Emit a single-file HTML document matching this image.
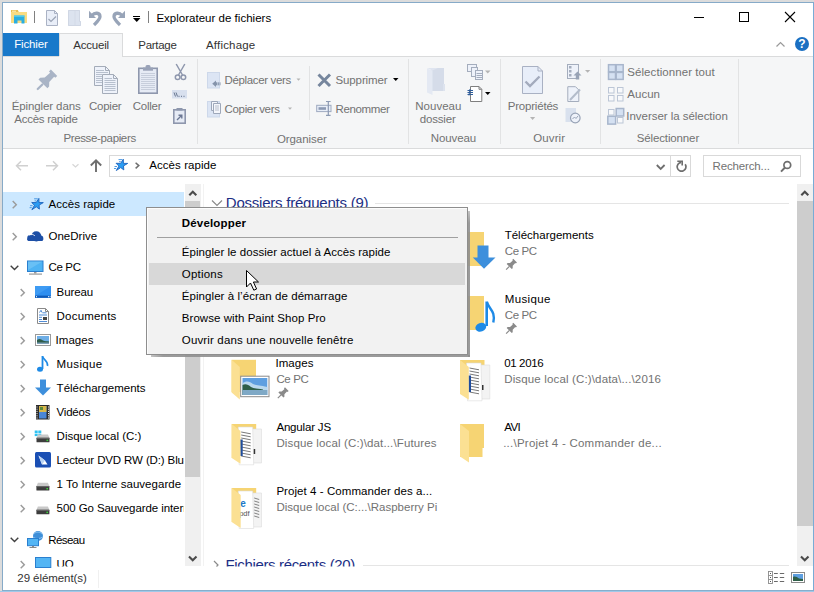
<!DOCTYPE html>
<html><head><meta charset="utf-8">
<style>
*{margin:0;padding:0;box-sizing:border-box}
html,body{width:814px;height:592px;overflow:hidden;background:#dcdcdc;font-family:"Liberation Sans",sans-serif;font-size:12px;color:#000}
.a{position:absolute}
.t{position:absolute;white-space:nowrap;line-height:16px;font-size:12px;letter-spacing:-0.3px}
.g{color:#6d6d6d}
#win{position:absolute;left:2px;top:2px;width:812px;height:589px;border:1px solid #86aac8;border-right-color:#78acd6;border-bottom-color:#86aecc;background:#fff;overflow:hidden}
svg{position:absolute;overflow:visible}
.tx text{font-family:"Liberation Sans",sans-serif;white-space:pre}
</style></head><body>
<div class="a" style="left:0;top:591px;width:814px;height:1px;background:#a0c8e8"></div>
<div id="win"></div>

<!-- all content positioned in page coords -->
<div class="a" style="left:0;top:0;width:814px;height:592px">

<!-- ===== TITLE BAR ===== -->
<!-- QAT icons -->
<svg style="left:11px;top:10px" width="16" height="14" viewBox="0 0 16 14">
 <path d="M0 0.5H7L8 2H16V13H0Z" fill="#f3d36b"/>
 <rect x="0" y="0" width="7" height="2" fill="#e9bf52"/>
 <rect x="1" y="0.7" width="4" height="1" fill="#fff3c0"/>
 <rect x="0" y="2" width="16" height="11" fill="#f9dc82"/>
 <path d="M3 5.5H13.5V13.5H10.5V10.5H6.5V13.5H3Z" fill="#2aaee0"/>
 <rect x="3" y="5.5" width="10.5" height="1.2" fill="#5fd3f0"/>
</svg>
<div class="a" style="left:34px;top:11px;width:1px;height:12px;background:#808080"></div>
<svg style="left:46px;top:10px" width="12" height="16" viewBox="0 0 12 16">
 <path d="M0.5 0.5H8.5L11.5 3.5V15.5H0.5Z" fill="#e9eef8" stroke="#aab2c4"/>
 <path d="M8.5 0.5V3.5H11.5" fill="none" stroke="#aab2c4"/>
 <path d="M2.5 9L5 11.5L10 6.5" fill="none" stroke="#9aa3b5" stroke-width="1.2"/>
</svg>
<svg style="left:68px;top:10px" width="14" height="16" viewBox="0 0 14 16">
 <path d="M0 0H12V11H13V16H0Z" fill="#dce3ef"/>
 <path d="M0.5 0.5H11.5V11.5H12.5V15.5H0.5Z" fill="none" stroke="#d0d7e4"/>
 <path d="M7 1V15" stroke="#d3dae7"/>
</svg>
<svg style="left:89px;top:11px" width="14" height="16" viewBox="0 0 14 16">
 <path d="M0 -0.2V7H7Z" fill="#98a4b8"/>
 <path d="M3.2 4.2C5.5 1.5 11 1.2 11 5.8C11 8.2 9 10 5 14" fill="none" stroke="#98a4b8" stroke-width="3.3"/>
</svg>
<svg style="left:112px;top:11px" width="14" height="16" viewBox="0 0 14 16">
 <g transform="translate(13,0) scale(-1,1)">
 <path d="M0 -0.2V7H7Z" fill="#98a4b8"/>
 <path d="M3.2 4.2C5.5 1.5 11 1.2 11 5.8C11 8.2 9 10 5 14" fill="none" stroke="#98a4b8" stroke-width="3.3"/>
 </g>
</svg>
<div class="a" style="left:133px;top:16px;width:7px;height:1px;background:#000"></div>
<svg style="left:133px;top:18px" width="8" height="5" viewBox="0 0 8 5"><path d="M0 0H7.5L3.75 4Z" fill="#000"/></svg>
<div class="a" style="left:148px;top:11px;width:1px;height:12px;background:#808080"></div>

<!-- min/max/close -->
<div class="a" style="left:694px;top:17px;width:10px;height:1px;background:#000"></div>
<div class="a" style="left:739px;top:12px;width:10px;height:10px;border:1px solid #000"></div>
<svg style="left:785px;top:12px" width="10" height="10"><path d="M0 0L10 10M10 0L0 10" stroke="#000" stroke-width="1.1"/></svg>

<!-- ===== TABS ===== -->
<div class="a" style="left:3px;top:33px;width:56px;height:23px;background:#1979ca"></div>
<div class="a" style="left:59px;top:33px;width:64px;height:24px;background:#f5f6f7;border:1px solid #dadbdc;border-bottom:none"></div>
<!-- help / collapse -->
<svg style="left:776px;top:42px" width="9" height="5"><path d="M0.5 4.5L4.5 0.5L8.5 4.5" stroke="#9a9a9a" fill="none" stroke-width="1.2"/></svg>
<div class="a" style="left:795px;top:37px;width:14px;height:14px;border-radius:50%;background:#1a6fc2;color:#fff;font-weight:bold;font-size:12px;line-height:14px;text-align:center">?</div>

<!-- ===== RIBBON ===== -->
<div class="a" style="left:3px;top:56px;width:810px;height:93px;background:#f5f6f7;border-top:1px solid #dadbdc;border-bottom:1px solid #dadbdc"></div>
<div class="a" style="left:59px;top:56px;width:63px;height:1px;background:#f5f6f7"></div>
<!-- group separators -->
<div class="a" style="left:197px;top:59px;width:1px;height:85px;background:#e2e3e4"></div>
<div class="a" style="left:408px;top:59px;width:1px;height:85px;background:#e2e3e4"></div>
<div class="a" style="left:500px;top:59px;width:1px;height:85px;background:#e2e3e4"></div>
<div class="a" style="left:600px;top:59px;width:1px;height:85px;background:#e2e3e4"></div>
<div class="a" style="left:738px;top:59px;width:1px;height:85px;background:#e2e3e4"></div>
<div class="a" style="left:309px;top:66px;width:1px;height:54px;background:#e2e3e4"></div>

<!-- Presse-papiers -->
<!-- Organiser -->
<!-- Nouveau -->
<!-- Ouvrir -->
<!-- Sélectionner -->


<svg style="left:0;top:0" width="814" height="592" viewBox="0 0 814 592">
<!-- pin -->
<g transform="translate(43.8 83) rotate(45)" fill="#a9b4c6">
 <path d="M-4.5 -14.5H4.5V-11.8H2.8L3.2 -4.5L6.3 -1.2V1.2H-6.3V-1.2L-3.2 -4.5L-2.8 -11.8H-4.5Z"/>
 <rect x="-1.1" y="1" width="2.2" height="8.6" rx="1"/>
</g>
<!-- copy -->
<g stroke="#a4acb9" fill="#eef2fa">
 <path d="M94.5 66.5H105.5L109.5 70.5V85.5H94.5Z"/>
 <path d="M105.5 66.5V70.5H109.5" fill="none"/>
 <path d="M102.5 74.5H113.5L117.5 78.5V93.5H102.5Z"/>
 <path d="M113.5 74.5V78.5H117.5" fill="none"/>
</g>
<g stroke="#b7c0ce" stroke-width="1">
 <path d="M96 70.5H104M96 72.5H108M96 74.5H102M96 76.5H102M96 78.5H102M96 80.5H102M96 82.5H102"/>
 <path d="M104.5 78.5H112M104.5 80.5H115.5M104.5 82.5H115.5M104.5 84.5H115.5M104.5 86.5H115.5M104.5 88.5H115.5M104.5 90.5H115.5"/>
</g>
<!-- paste clipboard -->
<rect x="138.8" y="68.3" width="18.4" height="24.9" fill="#e6ebf5" stroke="#8e97ad" stroke-width="1.6"/>
<path d="M141 73.5H155M141 75.5H155M141 77.5H155M141 79.5H155M141 81.5H155M141 83.5H155M141 85.5H155M141 87.5H155M141 89.5H155" stroke="#c3cbd9" stroke-width="0.9"/>
<rect x="143" y="67.5" width="10" height="3.2" fill="#9aa3b8"/>
<rect x="145.5" y="65" width="5" height="3.5" rx="1.5" fill="#9aa3b8"/>
<!-- scissors -->
<g stroke="#8e97ad" fill="none" stroke-width="1.5">
 <path d="M176.2 64L182.5 75M184.8 64L178.5 75"/>
 <circle cx="177.6" cy="77.2" r="2.3"/>
 <circle cx="183.4" cy="77.2" r="2.3"/>
</g>
<!-- copy path -->
<rect x="172" y="90" width="15" height="8.5" fill="#d8e0ee"/>
<path d="M174 92.5L175.5 96.5M176 92.5L177.5 96.5" stroke="#5a6a85" stroke-width="0.9"/>
<path d="M178.5 96.3h1M181 96.3h1M183.5 96.3h1" stroke="#5a6a85" stroke-width="1"/>
<!-- paste shortcut -->
<rect x="173.8" y="109.8" width="11.4" height="13.4" fill="#e6ebf5" stroke="#8e97ad" stroke-width="1.6"/>
<rect x="176.5" y="108" width="6" height="2.5" fill="#8e97ad"/>
<path d="M177 120L181.5 115.5M178.5 115.3H181.8V118.5" stroke="#6c7894" stroke-width="1.4" fill="none"/>

<!-- move to -->
<rect x="207.5" y="72.5" width="12" height="15.5" fill="#dce5f4" stroke="#cdd8ea"/>
<path d="M212.2 83.8L216 80.6V87Z" fill="#8594ab"/>
<rect x="215.8" y="82.3" width="4.7" height="3" fill="#8594ab"/>
<path d="M217.6 82V85.6M219.3 82V85.6" stroke="#dce5f4" stroke-width="0.6"/>
<!-- copy to -->
<rect x="207.5" y="101.5" width="12" height="15.5" fill="#dce5f4" stroke="#cdd8ea"/>
<g stroke="#9ea8ba" fill="#f4f6fb">
 <path d="M211.5 101.5H217.5V110.5H211.5Z"/>
 <path d="M213.5 103.5H220.5V113.5H213.5Z"/>
</g>
<path d="M215 106H219M215 108H219M215 110H219" stroke="#a9b2c2" stroke-width="0.8"/>
<!-- delete X -->
<path d="M318.5 74.5L330 86M330 74.5L318.5 86" stroke="#76869d" stroke-width="3"/>
<!-- rename -->
<rect x="316.7" y="105.3" width="14.3" height="6.3" fill="#e8eef8" stroke="#9eaac0"/>
<rect x="318.5" y="107.2" width="7.5" height="2.6" fill="#8c9ab3"/>
<path d="M328.3 101.5V115.3M326 101.5H330.6M326 115.3H330.6" stroke="#8c9ab3" stroke-width="1.2"/>

<!-- new folder big -->
<path d="M431 68H444V91H431Z" fill="#d5dce9"/>
<path d="M443 84V91H445V84Z" fill="#dde3ee"/>
<path d="M427 68.5L432.5 70.5V95L427 92.5Z" fill="#e4e9f3"/>
<path d="M427 68H438L432.5 70.5Z" fill="#dfe5f0"/>
<!-- new item small top -->
<g stroke="#a4adbd" fill="#eef2fa">
 <rect x="467.5" y="64.5" width="9" height="7"/>
 <rect x="471.5" y="67.5" width="6" height="9"/>
 <rect x="475.5" y="70.5" width="7" height="9"/>
</g>
<path d="M476.5 73.5H482M476.5 75.5H482M476.5 77.5H482" stroke="#a4adbd"/>
<path d="M485 70.5H490.5L487.75 73.5Z" fill="#b4b4b4"/>
<!-- new item doc -->
<path d="M470.5 86.5H479L481.8 89.3V101.5H470.5Z" fill="#fff" stroke="#7f7f7f"/>
<path d="M479 86.5V89.3H481.8" fill="none" stroke="#7f7f7f"/>
<path d="M467.5 90.5H473M467.5 92.5H473M467.5 94.5H473M470 89L469 95.5" stroke="#2e5c9a" stroke-width="1"/>
<path d="M485 92H490.5L487.75 95Z" fill="#000"/>

<!-- properties -->
<path d="M522.5 66.5H538L542.5 71V93.5H522.5Z" fill="#e8eef9" stroke="#a9b1c3"/>
<path d="M538 66.5V71H542.5" fill="none" stroke="#a9b1c3"/>
<path d="M525.5 81.5L530 86L539.5 76.5" fill="none" stroke="#a3abbd" stroke-width="2.4"/>
<path d="M530 117H535.2L532.6 120Z" fill="#b4b4b4"/>
<!-- open list -->
<rect x="567.5" y="64.5" width="11" height="14" fill="#eef2fa" stroke="#a4adbd"/>
<rect x="569" y="66" width="2.5" height="2.5" fill="#a4adbd"/>
<rect x="569" y="70" width="2.5" height="2.5" fill="#a4adbd"/>
<rect x="569" y="74" width="2.5" height="2.5" fill="#a4adbd"/>
<path d="M577.5 71.5L581.5 75.5H579.2V79.5H575.8V75.5H573.5Z" fill="#98a3b6"/>
<path d="M585 70H590.3L587.65 72.8Z" fill="#b4b4b4"/>
<!-- edit -->
<path d="M567.8 86.7H575.5L578.8 90V101.5H567.8Z" fill="#eef2fa" stroke="#a4adbd"/>
<path d="M570 100L580 89.5" stroke="#b3bccb" stroke-width="2"/>
<!-- history -->
<rect x="565.5" y="108" width="10.5" height="14" fill="#d9e1ee"/>
<circle cx="575.3" cy="118" r="4.8" fill="#eef2fa" stroke="#98a3b6" stroke-width="1.2"/>
<path d="M572.5 119L574.5 117L576 118.5L578 116" stroke="#98a3b6" fill="none"/>

<!-- select all -->
<g fill="#d5e1f2" stroke="#a8b6cc" stroke-width="1.5">
 <rect x="608.5" y="64.7" width="7" height="7"/>
 <rect x="616.2" y="64.7" width="7" height="7"/>
 <rect x="608.5" y="72.4" width="7" height="7"/>
 <rect x="616.2" y="72.4" width="7" height="7"/>
</g>
<!-- none -->
<g fill="#f8f9fb" stroke="#bcc6d6" stroke-width="1">
 <rect x="608.5" y="87.5" width="5.5" height="5.5"/>
 <rect x="617.5" y="87.5" width="5.5" height="5.5"/>
 <rect x="608.5" y="95.5" width="5.5" height="5.5"/>
 <rect x="617.5" y="95.5" width="5.5" height="5.5"/>
</g>
<!-- invert -->
<g fill="#f8f9fb" stroke="#bcc6d6" stroke-width="1">
 <rect x="608.5" y="109.5" width="5.5" height="5.5"/>
 <rect x="617.5" y="117.5" width="5.5" height="5.5"/>
</g>
<g fill="#d5e1f2" stroke="#a8b6cc" stroke-width="1.5">
 <rect x="616.2" y="108.5" width="7.5" height="7.5"/>
 <rect x="607.8" y="116.3" width="7.8" height="7.8"/>
</g>
<!-- small dropdown arrows organiser -->
<path d="M296.5 78.5H300.5L298.5 80.8Z" fill="#b4b4b4"/>
<path d="M288 107.5H292L290 109.8Z" fill="#b4b4b4"/>
<path d="M393 78H398.5L395.75 81Z" fill="#000"/>
</svg>

<!-- ===== NAV BAR ===== -->
<div class="a" style="left:109px;top:155px;width:582px;height:22px;border:1px solid #d9d9d9;background:#fff"></div>
<div class="a" style="left:670px;top:156px;width:1px;height:20px;background:#d9d9d9"></div>
<div class="a" style="left:703px;top:155px;width:98px;height:22px;border:1px solid #d9d9d9;background:#fff"></div>

<!-- ===== NAV PANE ===== -->
<div class="a" style="left:3px;top:192px;width:181px;height:24px;background:#cce8ff"></div>
<div class="a" style="left:185px;top:184px;width:16px;height:382px;background:#f0f0f0"></div>
<div class="a" style="left:185px;top:201px;width:15px;height:276px;background:#cdcdcd"></div>
<div class="a" style="left:203px;top:184px;width:1px;height:382px;background:#f2f2f2"></div>

<!-- ===== CONTENT ===== -->
<div class="a" style="left:797px;top:184px;width:16px;height:382px;background:#f0f0f0"></div>
<div class="a" style="left:797px;top:201px;width:16px;height:325px;background:#cdcdcd"></div>
<div class="a" style="left:363px;top:565px;width:426px;height:1px;background:#e5e5e5"></div>
<div class="a" style="left:375px;top:203px;width:414px;height:1px;background:#e5e5e5"></div>




<svg style="left:0;top:0" width="814" height="592" viewBox="0 0 814 592">
<defs>
 <g id="star">
  <path d="M9.3 0.6L9.4 4.8L13.7 4.8L9.5 7.3L9.8 11.3L6.7 9L2.3 11.9L4.9 7.5L2.1 4.7L6.6 4.8Z" fill="#2b9cf2" stroke="#1a62bd" stroke-width="0.9" stroke-linejoin="round"/>
  <path d="M4.5 1H8.2M5 3.1H6.8M0.5 7.9H3M0 9.9H2.2" stroke="#3a8ee0" stroke-width="0.9"/>
 </g>
 <g id="chev"><path d="M0.7 0.7L4.3 4.3L0.7 7.9" fill="none" stroke="#9c9c9c" stroke-width="1.45"/></g>
 <g id="chevd"><path d="M0.7 0.7L4.5 4.5L8.3 0.7" fill="none" stroke="#404040" stroke-width="1.4"/></g>
 <g id="drive">
  <path d="M1.5 0H11.5L13 3.5H0Z" fill="#c9c9c9"/>
  <rect x="0" y="3.3" width="13" height="4.5" rx="0.6" fill="#3d3d3d"/>
  <rect x="0" y="3.3" width="13" height="1" fill="#6a6a6a"/>
  <rect x="10" y="5.2" width="1.6" height="1.4" fill="#3cd43c"/>
 </g>
 <g id="pin" fill="#8a8a8a">
  <g transform="rotate(45)">
   <path d="M-2.6 -7.5H2.6V-6H1.7L1.9 -2.2L3.6 -0.5V0.8H-3.6V-0.5L-1.9 -2.2L-1.7 -6H-2.6Z"/>
   <rect x="-0.6" y="0.6" width="1.2" height="4.6"/>
  </g>
 </g>
 <g id="docfolder">
  <path d="M0 0H24.5V34H0Z" fill="#f6d473"/>
  <path d="M20 5H29.8V39H21Z" fill="#f3f3f3" stroke="#dcdcdc" stroke-width="0.6"/>
  <path d="M6.5 3H21L22 40.8H7.5Z" fill="#fff" stroke="#dadada" stroke-width="0.6"/>
  <path d="M9.5 8L19 9.8M9.5 11L19 12.8M9.5 14L19 15.8M9.5 17L19 18.8M9.5 20L19 21.8M9.5 23L19 24.8M9.5 26L19 27.8M9.5 29L19 30.8M9.5 32L19 33.8" stroke="#6a6a6a" stroke-width="0.9"/>
  <path d="M8.3 15.5H11V32H8.6Z" fill="#1f4d9e"/>
  <rect x="22" y="25" width="1.5" height="5" fill="#333"/>
  <path d="M0 0L8.8 7V39.8L0 34Z" fill="#fbe093"/>
 </g>
 <g id="folderback">
  <path d="M0 0H24.5V34H0Z" fill="#f6d473"/>
 </g>
</defs>

<!-- nav bar -->
<path d="M16.5 165.8H28M21 161.3L16.5 165.8L21 170.3" fill="none" stroke="#d0d0d0" stroke-width="1.5"/>
<path d="M46 165.8H57.5M53 161.3L57.5 165.8L53 170.3" fill="none" stroke="#d0d0d0" stroke-width="1.5"/>
<path d="M72.5 164.2L75.5 167L78.5 164.2" fill="none" stroke="#d6d6d6" stroke-width="1.2"/>
<path d="M96 160.5V172M90.8 165.5L96 160.3L101.2 165.5" fill="none" stroke="#6e6e6e" stroke-width="1.9"/>
<use href="#star" x="114" y="158.6"/>
<path d="M135.6 162.8L138.8 165.6L135.6 168.4" fill="none" stroke="#6e6e6e" stroke-width="1.5"/>
<path d="M656.8 165L660.7 168.9L664.6 165" fill="none" stroke="#6e6e6e" stroke-width="1.8"/>
<path d="M681.2 162.4A4.4 4.4 0 1 0 685.2 164.3" fill="none" stroke="#6e6e6e" stroke-width="1.7"/>
<path d="M677.3 161.2H682.2V165.6" fill="none" stroke="#6e6e6e" stroke-width="1.6"/>
<circle cx="787.3" cy="165" r="3.4" fill="none" stroke="#6e6e6e" stroke-width="1.7"/>
<path d="M785 167.5L781 171.6" stroke="#6e6e6e" stroke-width="2"/>

<!-- nav pane chevrons -->
<use href="#chev" x="12" y="200.4"/>
<use href="#chev" x="12" y="232.4"/>
<use href="#chevd" x="10" y="265"/>
<use href="#chev" x="20" y="288.4"/>
<use href="#chev" x="20" y="312.4"/>
<use href="#chev" x="20" y="336.4"/>
<use href="#chev" x="20" y="360.4"/>
<use href="#chev" x="20" y="384.4"/>
<use href="#chev" x="20" y="408.4"/>
<use href="#chev" x="20" y="432.4"/>
<use href="#chev" x="20" y="456.4"/>
<use href="#chev" x="20" y="480.4"/>
<use href="#chev" x="20" y="504.4"/>
<use href="#chevd" x="10" y="537"/>
<use href="#chev" x="20" y="560.4"/>

<!-- nav pane icons -->
<use href="#star" x="29.6" y="197.8"/>
<!-- onedrive cloud -->
<g fill="#1d4fa6">
 <circle cx="36.3" cy="236.3" r="5.1"/>
 <circle cx="30.3" cy="238" r="3.1"/>
 <circle cx="40.6" cy="238.2" r="2.7"/>
 <rect x="27.2" y="238" width="16" height="2.9" rx="1.4"/>
</g>
<path d="M29.5 235.3C31 233.8 33.5 234 34.8 236" fill="none" stroke="#fff" stroke-width="0.9"/>
<!-- monitor Ce PC -->
<rect x="27.5" y="261" width="15.5" height="10.5" fill="#4fb3f3" stroke="#2a7fcf"/>
<path d="M28 261.5L42.5 261.5L28 270Z" fill="#7cc8f7" opacity="0.6"/>
<rect x="34" y="272" width="2.5" height="1.5" fill="#9a9a9a"/>
<rect x="29" y="273.5" width="13" height="1.2" fill="#9a9a9a"/>
<!-- bureau -->
<rect x="35" y="286" width="16" height="11.8" fill="#2f8ff0"/>
<path d="M35 286H51L35 296Z" fill="#4aa3f5" opacity="0.6"/>
<rect x="35" y="295.6" width="16" height="2.2" fill="#0e5ab8"/>
<rect x="36" y="296.2" width="1" height="1" fill="#fff"/><rect x="48" y="296.2" width="1" height="1" fill="#fff"/><rect x="49.6" y="296.2" width="1" height="1" fill="#fff"/>
<!-- documents -->
<path d="M37.5 308.5H45.5L48.5 311.5V323.5H37.5Z" fill="#fff" stroke="#8a8a8a"/>
<path d="M45.5 308.5V311.5H48.5" fill="none" stroke="#8a8a8a"/>
<path d="M39.5 312.5L41 310.3L42 312.5M42.5 312.8H46.5M39 315H47M39 317.3H42M39 319.5H42M39 321.5H47" stroke="#3d7fd0" stroke-width="0.9" fill="none"/>
<rect x="43" y="317" width="4" height="3" fill="#444"/>
<!-- images -->
<rect x="35.5" y="334.5" width="15" height="11" fill="#fff" stroke="#9a9a9a"/>
<rect x="37" y="336" width="12" height="8" fill="#6eaee6"/>
<path d="M37 340C39 338.5 41 338.7 43 340.5C45 341.5 47 341 49 341.5V344H37Z" fill="#2d5c4a"/>
<path d="M37 342.5H49V344H37Z" fill="#7ea0b8"/>
<!-- musique -->
<path d="M42.5 356V369" stroke="#1e8ae6" stroke-width="1.8"/>
<ellipse cx="40" cy="369.3" rx="3" ry="2.5" fill="#1e8ae6"/>
<path d="M42.5 356.5C43.5 360 48.5 361 47.5 366" fill="none" stroke="#1e8ae6" stroke-width="1.6"/>
<!-- telechargements -->
<path d="M40 379.6H46V387.5H51L43 395.6L35 387.5H40Z" fill="#3d8fdc"/>
<!-- videos -->
<rect x="36" y="405" width="13.5" height="14.5" fill="#2a2a2a"/>
<rect x="39" y="406" width="7.5" height="12.5" fill="#4a86d6"/>
<rect x="39" y="406" width="7.5" height="6" fill="#d8b84a"/>
<rect x="40" y="407" width="3" height="3" fill="#5a8a3a"/>
<path d="M37 406.5V418.5M48.5 406.5V418.5" stroke="#fff" stroke-width="1" stroke-dasharray="1 1.2"/>
<!-- disque local -->
<rect x="34.7" y="430.5" width="3" height="2.5" fill="#2ec2f2"/><rect x="38.3" y="430.5" width="3" height="2.5" fill="#2ec2f2"/>
<rect x="34.7" y="433.6" width="3" height="2.5" fill="#2ec2f2"/><rect x="38.3" y="433.6" width="3" height="2.5" fill="#2ec2f2"/>
<use href="#drive" x="36.5" y="434.5"/>
<!-- dvd -->
<rect x="35" y="452" width="16" height="15.6" rx="1.5" fill="#1a4fb4"/>
<path d="M38.5 455.5L45 460.5L47.5 464.5H42L38.5 455.5Z" fill="#fff"/>
<path d="M38.5 455.5L45 460.5L42 464.5Z" fill="#b9d3f3"/>
<!-- drives -->
<use href="#drive" x="36.4" y="482.8"/>
<use href="#drive" x="36.4" y="506.5"/>
<!-- reseau -->
<circle cx="38" cy="536" r="5" fill="#3f8fd8"/>
<path d="M34 533.5C36 532 39 531.5 42 533.5M33.5 537.5C36 539 40 539 42.7 537" stroke="#9fd0f7" stroke-width="0.8" fill="none"/>
<rect x="27.5" y="538.5" width="11" height="7.2" fill="#53b5f4" stroke="#2a7fcf"/>
<rect x="32" y="546" width="2" height="1" fill="#8a8a8a"/>
<rect x="29.5" y="547" width="7" height="1" fill="#8a8a8a"/>
<!-- UQ -->
<rect x="35.5" y="557.5" width="15.3" height="10" fill="#53b5f4" stroke="#2a7fcf"/>

<!-- nav scrollbar arrows -->
<path d="M189.3 195.3L192.8 191.8L196.3 195.3" fill="none" stroke="#4a4a4a" stroke-width="2.1"/>
<path d="M189 556.5L192.75 560.3L196.5 556.5" fill="none" stroke="#4a4a4a" stroke-width="2.1"/>
<!-- content scrollbar arrows -->
<path d="M801.3 195.3L804.8 191.8L808.3 195.3" fill="none" stroke="#4a4a4a" stroke-width="2.1"/>
<path d="M801 556.5L804.75 560.3L808.5 556.5" fill="none" stroke="#4a4a4a" stroke-width="2.1"/>

<!-- content section chevrons -->
<path d="M212 200.5L217 205.5L222 200.5" fill="none" stroke="#8a8a8a" stroke-width="1.2"/>
<path d="M214 561L218 565L216.5 566.5" fill="none" stroke="#8a8a8a" stroke-width="1.2"/>

<!-- folders: generic plain -->
<g id="f_tel">
 <path d="M460 232H484V266H460Z" fill="#f6d473"/>
 <path d="M477.5 245.5H488.5V257.5H495.5L484 268.7L472.8 257.5H477.5Z" fill="#3d8fdc"/>
</g>
<g>
 <path d="M460 296H484V330H460Z" fill="#f6d473"/>
 <path d="M486.7 301.5V326" stroke="#1e8ae6" stroke-width="2.6"/>
 <ellipse cx="480.8" cy="327.2" rx="5.6" ry="4.3" transform="rotate(-20 480.8 327.2)" fill="#1e8ae6"/>
 <path d="M487 302C488.5 309 496 311 493.3 322.5" fill="none" stroke="#1e8ae6" stroke-width="2.4"/>
</g>
<!-- images folder -->
<path d="M231.6 359.8H256V392H231.6Z" fill="#f6d473"/>
<path d="M231.6 359.8L239.8 367V399.4L231.6 392.5Z" fill="#fbe093"/>
<rect x="240.7" y="376.2" width="28.3" height="20.5" fill="#fff" stroke="#8a8a8a"/>
<rect x="242.5" y="378" width="24.8" height="17" fill="#5e9fe0"/>
<path d="M242.5 383C246 380.5 250 381 253 384C256 385.5 260 385 267.3 387V395H242.5Z" fill="#b9d8ee"/>
<path d="M242.5 385C245 383.5 248 384 251 387C254 388.5 258 389 263 389.5V395H242.5Z" fill="#2e5f48"/>
<path d="M242.5 390H267.3V395H242.5Z" fill="#7fa9c6"/>
<!-- 01 2016 -->
<use href="#docfolder" x="460" y="360"/>
<!-- AVI -->
<path d="M460 424H484V448H482.5V457H460Z" fill="#f6d473"/>
<path d="M460 424L469 431V462.6L460 456.6Z" fill="#fbe093"/>
<!-- Angular -->
<use href="#docfolder" x="231.7" y="424"/>
<!-- Projet 4 -->
<g transform="translate(231.7 488)">
 <path d="M0 0H24.5V34H0Z" fill="#f6d473"/>
 <path d="M20 5H29.8V39H21Z" fill="#f3f3f3" stroke="#dcdcdc" stroke-width="0.6"/>
 <path d="M6.5 3H21L22 40.5H7.5Z" fill="#fff" stroke="#dadada" stroke-width="0.6"/>
 <path d="M22.5 10L27.5 11.5M22.5 13L27.5 14.5M22.5 16L27.5 17.5M22.5 19L27.5 20.5M22.5 22L27.5 23.5M22.5 25L27.5 26.5M22.5 28L27.5 29.5" stroke="#777" stroke-width="0.9"/>
 <text x="8.5" y="18.5" style="font:bold 10px 'Liberation Sans';fill:#1d78c8">e</text>
 <text x="7.5" y="28" style="font:7.5px 'Liberation Sans';fill:#555">pdf</text>
 <path d="M0 0L9 7V40L0 34Z" fill="#fbe093"/>
</g>
<!-- pins under Ce PC items -->
<use href="#pin" x="509.8" y="266"/>
<use href="#pin" x="509.8" y="330"/>
<use href="#pin" x="281.5" y="394.5"/>

<!-- status bar icons -->
<rect x="768.5" y="571.5" width="4" height="12" fill="#fff" stroke="#8a8a8a" stroke-width="0.9"/>
<path d="M768.5 575.5H772.5M768.5 579.5H772.5" stroke="#8a8a8a" stroke-width="0.9"/>
<rect x="770" y="573" width="1" height="1" fill="#555"/><rect x="770" y="577" width="1" height="1" fill="#555"/><rect x="770" y="581" width="1" height="1" fill="#555"/>
<path d="M774 573.5H777.8M779.8 573.5H784.2M774 577.5H777.8M779.8 577.5H784.2M774 581.5H777.8M779.8 581.5H784.2" stroke="#6a6a6a" stroke-width="1"/>
<rect x="791.5" y="572.5" width="13" height="10" fill="#fff" stroke="#8a8a8a"/>
<rect x="793" y="574" width="10" height="7" fill="#5e9fe0"/>
<path d="M793 577C795 576 797 577 799 578.5L803 579V581H793Z" fill="#2e5f48"/>
<rect x="98" y="570" width="1" height="18" fill="#f0f0f0"/>
</svg>

<svg class="tx" style="left:0;top:0" width="814" height="592" viewBox="0 0 814 592">
<text x="156.4" y="21.8" fill="#000" style="font-size:11.5px;letter-spacing:0.015px">Explorateur de fichiers</text>
<text x="14.2" y="48.4" fill="#fff" style="font-size:11.5px;letter-spacing:-0.163px">Fichier</text>
<text x="73.2" y="48.6" fill="#333" style="font-size:11.5px;letter-spacing:-0.186px">Accueil</text>
<text x="138.3" y="48.6" fill="#333" style="font-size:11.5px;letter-spacing:-0.297px">Partage</text>
<text x="206" y="48.6" fill="#333" style="font-size:11.5px;letter-spacing:0.182px">Affichage</text>
<text x="11.7" y="109.6" fill="#727272" style="font-size:11.5px;letter-spacing:-0.106px">Épingler dans</text>
<text x="14.3" y="122.6" fill="#727272" style="font-size:11.5px;letter-spacing:-0.271px">Accès rapide</text>
<text x="89" y="109.6" fill="#727272" style="font-size:11.5px;letter-spacing:-0.249px">Copier</text>
<text x="132.7" y="109.6" fill="#727272" style="font-size:11.5px;letter-spacing:-0.221px">Coller</text>
<text x="63.4" y="142.3" fill="#727272" style="font-size:11.5px;letter-spacing:-0.353px">Presse-papiers</text>
<text x="224.6" y="83.7" fill="#727272" style="font-size:11.5px;letter-spacing:-0.366px">Déplacer vers</text>
<text x="224.6" y="112.8" fill="#727272" style="font-size:11.5px;letter-spacing:-0.35px">Copier vers</text>
<text x="335.5" y="83.7" fill="#727272" style="font-size:11.5px;letter-spacing:-0.115px">Supprimer</text>
<text x="335.5" y="112.8" fill="#727272" style="font-size:11.5px;letter-spacing:-0.364px">Renommer</text>
<text x="276.9" y="143" fill="#727272" style="font-size:11.5px;letter-spacing:-0.07px">Organiser</text>
<text x="415.3" y="110" fill="#727272" style="font-size:11.5px;letter-spacing:0.01px">Nouveau</text>
<text x="419.7" y="122.8" fill="#727272" style="font-size:11.5px;letter-spacing:-0.157px">dossier</text>
<text x="430.8" y="142.3" fill="#727272" style="font-size:11.5px;letter-spacing:-0.106px">Nouveau</text>
<text x="507.7" y="110" fill="#727272" style="font-size:11.5px;letter-spacing:-0.196px">Propriétés</text>
<text x="533.3" y="142.3" fill="#727272" style="font-size:11.5px;letter-spacing:0.085px">Ouvrir</text>
<text x="627.3" y="76.2" fill="#727272" style="font-size:11.5px;letter-spacing:0.068px">Sélectionner tout</text>
<text x="627.3" y="98.2" fill="#727272" style="font-size:11.5px;letter-spacing:0.022px">Aucun</text>
<text x="626.3" y="120" fill="#727272" style="font-size:11.5px;letter-spacing:-0.039px">Inverser la sélection</text>
<text x="636.7" y="142.3" fill="#727272" style="font-size:11.5px;letter-spacing:-0.127px">Sélectionner</text>
<text x="149.2" y="169.2" fill="#000" style="font-size:11.5px;letter-spacing:0.074px">Accès rapide</text>
<text x="712.5" y="169.9" fill="#727272" style="font-size:11.5px;letter-spacing:-0.141px">Recherch...</text>
<text x="17.3" y="581.7" fill="#333" style="font-size:11.5px;letter-spacing:-0.065px">29 élément(s)</text>
</svg>
<svg class="tx" style="left:0;top:0" width="814" height="592" viewBox="0 0 814 592">
<defs><clipPath id="cp_nav"><rect x="3" y="186" width="181" height="380.5"/></clipPath></defs><g clip-path="url(#cp_nav)">
<text x="48.5" y="207.7" fill="#000" style="font-size:11.5px;letter-spacing:0.02px">Accès rapide</text>
<text x="48.5" y="239.7" fill="#000" style="font-size:11.5px;letter-spacing:0.003px">OneDrive</text>
<text x="48.5" y="271.4" fill="#000" style="font-size:11.5px;letter-spacing:-0.35px">Ce PC</text>
<text x="56.6" y="295.6" fill="#000" style="font-size:11.5px;letter-spacing:-0.117px">Bureau</text>
<text x="56.6" y="319.5" fill="#000" style="font-size:11.5px;letter-spacing:0.198px">Documents</text>
<text x="55.6" y="343.6" fill="#000" style="font-size:11.5px;letter-spacing:0.028px">Images</text>
<text x="56.6" y="367.5" fill="#000" style="font-size:11.5px;letter-spacing:0.355px">Musique</text>
<text x="56.6" y="391.5" fill="#000" style="font-size:11.5px;letter-spacing:0.007px">Téléchargements</text>
<text x="56.6" y="415.7" fill="#000" style="font-size:11.5px;letter-spacing:-0.221px">Vidéos</text>
<text x="56.6" y="439.7" fill="#000" style="font-size:11.5px;letter-spacing:-0.023px">Disque local (C:)</text>
<text x="56.6" y="463.7" fill="#000" style="font-size:11.5px;letter-spacing:-0.125px">Lecteur DVD RW (D:) Blu-ray</text>
<text x="56.6" y="487.7" fill="#000" style="font-size:11.5px;letter-spacing:0.03px">1 To Interne sauvegarde</text>
<text x="56.6" y="511.7" fill="#000" style="font-size:11.5px;letter-spacing:-0.085px">500 Go Sauvegarde interne</text>
<text x="48.2" y="543.6" fill="#000" style="font-size:11.5px;letter-spacing:-0.548px">Réseau</text>
<text x="56.6" y="567.6" fill="#000" style="font-size:11.5px;letter-spacing:-0.2px">UQ</text>
</g>
</svg>
<svg class="tx" style="left:0;top:0" width="814" height="592" viewBox="0 0 814 592">
<defs><clipPath id="cp_content"><rect x="201" y="186" width="596" height="380.5"/></clipPath></defs><g clip-path="url(#cp_content)">
<text x="225.8" y="207.9" fill="#1b2e84" style="font-size:15px;letter-spacing:-0.227px">Dossiers fréquents (9)</text>
<text x="225.5" y="570" fill="#1b2e84" style="font-size:15px;letter-spacing:-0.346px">Fichiers récents (20)</text>
<text x="504.7" y="238.6" fill="#000" style="font-size:11.5px;letter-spacing:0.007px">Téléchargements</text>
<text x="504.7" y="254.9" fill="#727272" style="font-size:11.5px;letter-spacing:-0.35px">Ce PC</text>
<text x="504.7" y="302.7" fill="#000" style="font-size:11.5px;letter-spacing:0.388px">Musique</text>
<text x="504.7" y="318.9" fill="#727272" style="font-size:11.5px;letter-spacing:-0.35px">Ce PC</text>
<text x="504.2" y="366.7" fill="#000" style="font-size:11.5px;letter-spacing:-0.35px">01 2016</text>
<text x="504.2" y="382.8" fill="#727272" style="font-size:11.5px;letter-spacing:0.152px">Disque local (C:)\data\...\2016</text>
<text x="504.2" y="430.6" fill="#000" style="font-size:11.5px;letter-spacing:-0.544px">AVI</text>
<text x="503.2" y="446.8" fill="#727272" style="font-size:11.5px;letter-spacing:0.239px">...\Projet 4 - Commander de...</text>
<text x="275.4" y="366.7" fill="#000" style="font-size:11.5px;letter-spacing:0.088px">Images</text>
<text x="276.4" y="382.8" fill="#727272" style="font-size:11.5px;letter-spacing:-0.35px">Ce PC</text>
<text x="276.4" y="430.6" fill="#000" style="font-size:11.5px;letter-spacing:-0.176px">Angular JS</text>
<text x="276.4" y="446.8" fill="#727272" style="font-size:11.5px;letter-spacing:0.136px">Disque local (C:)\dat...\Futures</text>
<text x="276.4" y="494.6" fill="#000" style="font-size:11.5px;letter-spacing:0.063px">Projet 4 - Commander des a...</text>
<text x="276.4" y="510.8" fill="#727272" style="font-size:11.5px;letter-spacing:0.017px">Disque local (C:...\Raspberry Pi</text>
</g>
</svg>
<!-- ===== STATUS ===== -->


<!-- ===== CONTEXT MENU ===== -->
<div class="a" style="left:468px;top:211px;width:1.5px;height:146px;background:linear-gradient(#bdbdbd,#8f8f8f 12px);opacity:.9"></div>
<div class="a" style="left:151px;top:355px;width:318.5px;height:2px;background:linear-gradient(90deg,#bdbdbd,#8f8f8f 12px);opacity:.9"></div>
<div class="a" style="left:146px;top:207px;width:322px;height:148px;background:#f2f2f2;border:1px solid #8e8e8e"></div>
<div class="a" style="left:147px;top:208px;width:320px;height:146px;border-left:1px solid #fcfcfc;border-top:1px solid #fcfcfc"></div>
<div class="a" style="left:157px;top:237px;width:301px;height:1px;background:#a0a0a0"></div>
<div class="a" style="left:149px;top:263px;width:316px;height:22px;background:#d8d8d8"></div>
<svg class="tx" style="left:0;top:0" width="814" height="592" viewBox="0 0 814 592">
<text x="181.8" y="227" fill="#000" style="font-size:11.5px;letter-spacing:0.171px;font-weight:bold">Développer</text>
<text x="181.8" y="255.6" fill="#000" style="font-size:11.5px;letter-spacing:0.036px">Épingler le dossier actuel à Accès rapide</text>
<text x="181.8" y="277.7" fill="#000" style="font-size:11.5px;letter-spacing:0.203px">Options</text>
<text x="181.8" y="300" fill="#000" style="font-size:11.5px;letter-spacing:0.062px">Épingler à l’écran de démarrage</text>
<text x="181.8" y="321.9" fill="#000" style="font-size:11.5px;letter-spacing:0.054px">Browse with Paint Shop Pro</text>
<text x="181.8" y="343.6" fill="#000" style="font-size:11.5px;letter-spacing:0.153px">Ouvrir dans une nouvelle fenêtre</text>
</svg>
<svg style="left:0;top:0" width="814" height="592" viewBox="0 0 814 592">
<path d="M246.5 270.5V287L250.5 283L253.8 290.2L256.6 289L253.4 282H258.5Z" fill="#fff" stroke="#000" stroke-width="1" stroke-linejoin="miter"/>
</svg>

</div>
</body></html>
